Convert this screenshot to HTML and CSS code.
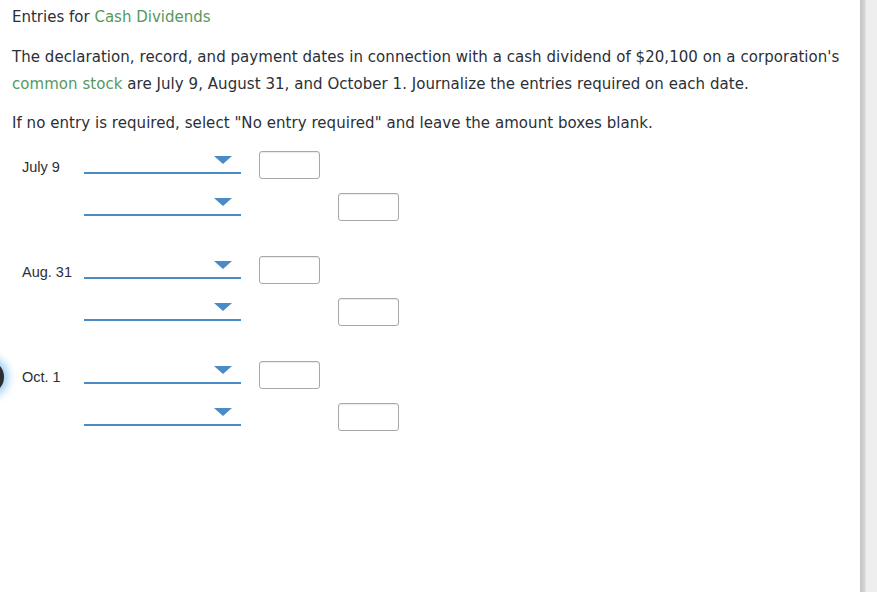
FILE: index.html
```html
<!DOCTYPE html>
<html lang="en">
  <head>
    <meta charset="UTF-8" />
    <meta name="viewport" content="width=device-width, initial-scale=1.0" />
    <title>Entries for Cash Dividends</title>
    <link rel="stylesheet" href="styles.css">
  </head>
  <body>
    <div class="page">
      <div class="question">
        <h1 class="q-title">Entries for <a class="term" href="#">Cash Dividends</a></h1>

        <p class="q-text">
          The declaration, record, and payment dates in connection with a cash dividend of $20,100 on a corporation's
          <a class="term" href="#">common stock</a> are July 9, August 31, and October 1. Journalize the entries required on each date.
        </p>
        <p class="q-text">If no entry is required, select "No entry required" and leave the amount boxes blank.</p>

        <div class="journal">
          <div class="entry">
            <div class="entry-row">
              <span class="entry-date">July 9</span>
              <div class="account-select"><span class="caret"></span></div>
              <input class="amount" type="text" />
            </div>
            <div class="entry-row credit">
              <span class="entry-date"></span>
              <div class="account-select"><span class="caret"></span></div>
              <input class="amount" type="text" />
            </div>
          </div>

          <div class="entry">
            <div class="entry-row">
              <span class="entry-date">Aug. 31</span>
              <div class="account-select"><span class="caret"></span></div>
              <input class="amount" type="text" />
            </div>
            <div class="entry-row credit">
              <span class="entry-date"></span>
              <div class="account-select"><span class="caret"></span></div>
              <input class="amount" type="text" />
            </div>
          </div>

          <div class="entry">
            <div class="entry-row">
              <span class="entry-date">Oct. 1</span>
              <div class="account-select"><span class="caret"></span></div>
              <input class="amount" type="text" />
            </div>
            <div class="entry-row credit">
              <span class="entry-date"></span>
              <div class="account-select"><span class="caret"></span></div>
              <input class="amount" type="text" />
            </div>
            <span class="focus-dot"></span>
          </div>
        </div>
      </div>
      <div class="side-rail"></div>
    </div>
  </body>
</html>
```

FILE: styles.css
```css
html, body {
  margin: 0;
  height: 100%;
  background: #fff;
}

.page {
  display: flex;
  height: 100%;
  overflow: hidden;
}

.question {
  position: relative;
  flex: 1;
  padding: 7px 12px 0 12px;
  color: #2b2f38;
  font-family: "DejaVu Sans", Verdana, sans-serif;
  font-size: 15px;
}

/* grey rail at the right edge of the frame */
.side-rail {
  width: 17px;
  background: linear-gradient(to right, #c4c4c4 0, #d6d6d6 5px, #eeeeee 6px, #eeeeee 100%);
}

.q-title {
  margin: 0 0 17px;
  font-size: 15px;
  font-weight: normal;
  line-height: 20px;
}

.term {
  color: #56985f;
  text-decoration: none;
}

.q-text {
  margin: 0 0 12px;
  line-height: 27px;
  letter-spacing: 0.05px;
}

.journal {
  padding-top: 1px;
}

.entry {
  position: relative;
  margin-bottom: 21px;
}

.entry-row {
  display: flex;
  align-items: flex-start;
  height: 42px;
}

.entry-date {
  width: 62px;
  padding: 9px 0 0 10px;
  font-family: "Liberation Sans", Arial, sans-serif;
  font-size: 14.5px;
  color: #2b2f38;
}

.account-select {
  position: relative;
  width: 157px;
  height: 22px;
  border-bottom: 2px solid #4a8ac6;
}

.caret {
  position: absolute;
  right: 9px;
  top: 6px;
  width: 0;
  height: 0;
  border-left: 9px solid transparent;
  border-right: 9px solid transparent;
  border-top: 8px solid #4a8ac6;
}

.amount {
  box-sizing: border-box;
  width: 61px;
  height: 28px;
  margin: 1px 0 0 18px;
  border: 1px solid #a8a8a8;
  border-radius: 3px;
  box-shadow: inset 0 1px 1px rgba(0, 0, 0, 0.08);
  background: #fff;
}

.credit .amount {
  margin-left: 97px;
}

/* focus marker peeking in from the left edge */
.focus-dot {
  position: absolute;
  left: -38px;
  top: 1px;
  width: 30px;
  height: 32px;
  border-radius: 50%;
  background: #2e2e2e;
  box-shadow: 0 0 8px 4px rgba(120, 190, 240, 0.75);
}
```
